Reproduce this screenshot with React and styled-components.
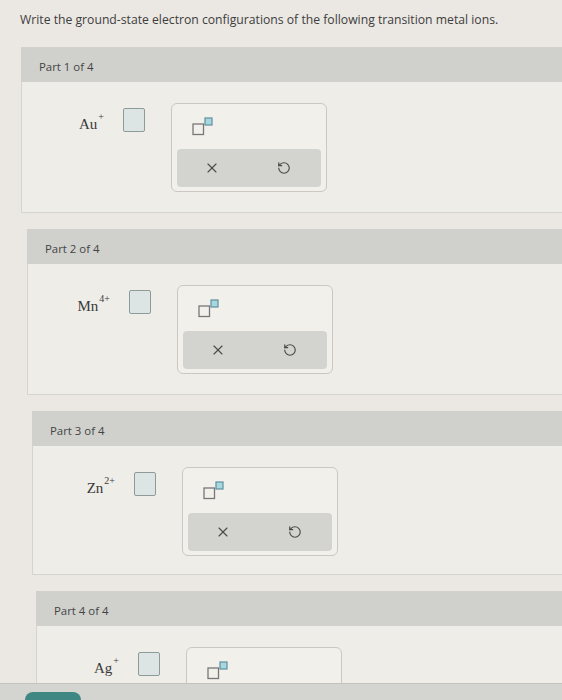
import React from "react";
import styled, { createGlobalStyle } from "styled-components";
import { X, RotateCcw } from "lucide-react";

const GlobalStyle = createGlobalStyle`
  html, body {
    margin: 0;
    padding: 0;
    background-color: #ebe8e3;
    font-family: "Open Sans", "DejaVu Sans", sans-serif;
    color: #3a3a3a;
    overflow: hidden;
  }
`;

const Page = styled.div`
  padding: 13px 0 40px 0;
  min-height: 700px;
  box-sizing: border-box;
`;

const Title = styled.p`
  margin: 0 0 20px 20px;
  font-size: 12.2px;
  line-height: 14px;
  color: #3d3d3d;
  white-space: nowrap;
`;

const PartList = styled.div`
  display: flex;
  flex-direction: column;
  gap: 16px;
`;

const Part = styled.section`
  margin-left: ${(p) => p.indent}px;
  margin-right: -20px;
`;

const PartHeader = styled.div`
  height: 35px;
  display: flex;
  align-items: center;
  padding: 4px 0 0 18px;
  box-sizing: border-box;
  background-color: #d0d1cd;
  font-size: 11.4px;
  color: #444;
`;

const PartBody = styled.div`
  height: ${(p) => p.height}px;
  box-sizing: border-box;
  border: 1px solid #d6d4cf;
  border-top: none;
  background-color: #efede8;
  padding: 21px 0 0 40px;
`;

const Row = styled.div`
  display: grid;
  grid-template-columns: 42px 22px 163px;
  column-gap: 19px;
  align-items: start;

  & > :last-child {
    margin-left: 7px;
  }
`;

const Ion = styled.div`
  justify-self: end;
  margin-top: 11px;
  font-family: "Liberation Serif", "DejaVu Serif", serif;
  font-size: 15px;
  color: #3a3a3a;
  white-space: nowrap;

  sup {
    font-size: 10px;
    margin-left: 1px;
    position: relative;
    top: -3px;
  }
`;

const InputBox = styled.div`
  width: 22px;
  height: 24px;
  margin-top: 5px;
  box-sizing: border-box;
  border: 1.5px solid #8c9c9b;
  border-radius: 2px;
  background-color: #dce5e4;
`;

const AnswerPanel = styled.div`
  height: 89px;
  box-sizing: border-box;
  border: 1px solid #c9c8c3;
  border-radius: 6px;
  background-color: #f2f0eb;
  display: flex;
  flex-direction: column;
  padding: 0 5px 4px 5px;
`;

const Palette = styled.div`
  flex: 1;
  padding: 13px 0 0 15px;
`;

const ButtonBar = styled.div`
  height: 38px;
  border-radius: 4px;
  background-color: #d3d4d0;
  display: flex;
  align-items: center;
  justify-content: space-between;
  padding: 0 30px 0 27px;
  color: #4a4a4a;
`;

const IconButton = styled.span`
  display: flex;
  align-items: center;
  justify-content: center;
`;

const Footer = styled.div`
  position: fixed;
  left: 0;
  right: 0;
  bottom: 0;
  height: 16px;
  background-color: #d4d4d0;
  border-top: 1px solid #c4c4bf;
`;

const FooterButton = styled.div`
  position: absolute;
  left: 25px;
  bottom: -6px;
  width: 56px;
  height: 14px;
  border-radius: 8px 8px 0 0;
  background-color: #3f8783;
`;

const SuperscriptIcon = () => (
  <svg width="22" height="19" viewBox="0 0 22 19">
    <rect x="1" y="7" width="10.5" height="10.5" fill="none" stroke="#777" strokeWidth="1.3" />
    <rect x="13" y="1" width="7" height="7" fill="#a9d7e0" stroke="#5e8fa0" strokeWidth="1.2" />
  </svg>
);

const parts = [
  { n: 1, symbol: "Au", charge: "+", indent: 21, height: 131 },
  { n: 2, symbol: "Mn", charge: "4+", indent: 27, height: 131 },
  { n: 3, symbol: "Zn", charge: "2+", indent: 32, height: 129 },
  { n: 4, symbol: "Ag", charge: "+", indent: 36, height: 131 },
];

const App = () => {
  return (
    <Page>
      <GlobalStyle />
      <Title>
        Write the ground-state electron configurations of the following transition metal ions.
      </Title>
      <PartList>
        {parts.map((part) => (
          <Part key={part.n} indent={part.indent}>
            <PartHeader>Part {part.n} of 4</PartHeader>
            <PartBody height={part.height}>
              <Row>
                <Ion>
                  {part.symbol}
                  <sup>{part.charge}</sup>
                </Ion>
                <InputBox />
                <AnswerPanel>
                  <Palette>
                    <SuperscriptIcon />
                  </Palette>
                  <ButtonBar>
                    <IconButton>
                      <X size={16} strokeWidth={1.7} />
                    </IconButton>
                    <IconButton>
                      <RotateCcw size={14} strokeWidth={2} />
                    </IconButton>
                  </ButtonBar>
                </AnswerPanel>
              </Row>
            </PartBody>
          </Part>
        ))}
      </PartList>
      <Footer>
        <FooterButton />
      </Footer>
    </Page>
  );
};

export default App;
